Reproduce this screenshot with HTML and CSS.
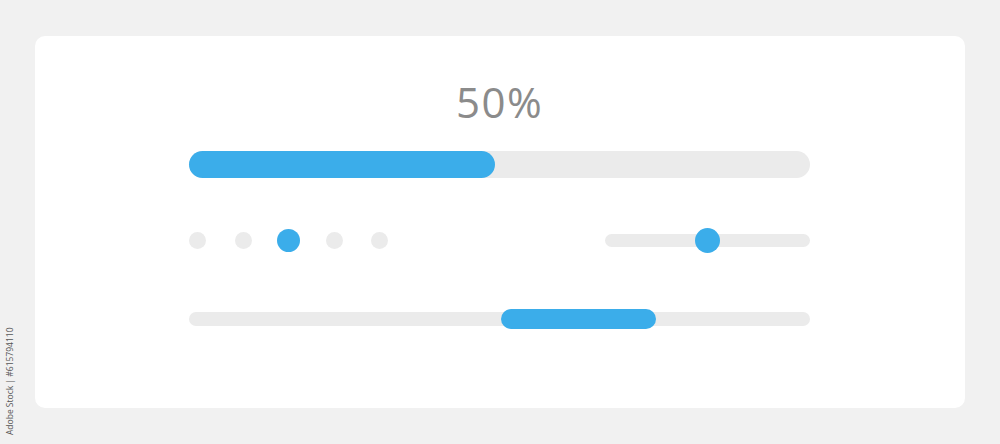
FILE: index.html
```html
<!DOCTYPE html>
<html lang="en">
<head>
<meta charset="utf-8">
<title>Progress UI</title>
<link rel="stylesheet" href="styles.css">
</head>
<body>
<main class="card">
  <div class="percent">50%</div>
  <div class="bar"><div class="bar-fill" style="width:306px"></div></div>
  <div class="controls">
    <div class="dots">
      <span class="dot"></span>
      <span class="dot"></span>
      <span class="dot active"></span>
      <span class="dot"></span>
      <span class="dot"></span>
    </div>
    <div class="slider">
      <div class="slider-track"></div>
      <span class="slider-knob" style="left:90px"></span>
    </div>
  </div>
  <div class="range">
    <div class="range-track"></div>
    <div class="range-sel" style="left:312px;width:155px"></div>
  </div>
</main>
<div class="credit">Adobe Stock | #615794110</div>
</body>
</html>
```
FILE: styles.css
```css
* { box-sizing: border-box; }
html, body { margin: 0; padding: 0; }
body {
  width: 1000px;
  height: 444px;
  background: #f1f1f1;
  padding: 36px 35px 36px 35px;
  font-family: "Open Sans", "Liberation Sans", sans-serif;
  position: relative;
  overflow: hidden;
}
.card {
  background: #ffffff;
  border-radius: 10px;
  height: 372px;
  padding: 0 155px 0 154px;
  display: flex;
  flex-direction: column;
}
.percent {
  margin-top: 38px;
  height: 56px;
  line-height: 56px;
  text-align: center;
  font-size: 42px;
  font-weight: 400;
  color: #8b8b8b;
  letter-spacing: 1.5px;
}
.bar {
  margin-top: 21px;
  height: 27px;
  border-radius: 14px;
  background: #ebebeb;
  display: flex;
}
.bar-fill {
  height: 100%;
  border-radius: 14px;
  background: #3badea;
}
.controls {
  margin-top: 50px;
  height: 25px;
  display: flex;
  align-items: center;
  justify-content: space-between;
}
.dots {
  display: flex;
  align-items: center;
  gap: 28.6px;
}
.dot {
  width: 17px;
  height: 17px;
  border-radius: 50%;
  background: #ebebeb;
}
.dot.active {
  width: 23px;
  height: 23px;
  margin: 0 -3px;
  background: #3badea;
}
.slider {
  position: relative;
  width: 205px;
  height: 25px;
  display: flex;
  align-items: center;
}
.slider-track {
  flex: 1;
  height: 13px;
  border-radius: 7px;
  background: #ebebeb;
}
.slider-knob {
  position: absolute;
  top: 0;
  width: 25px;
  height: 25px;
  border-radius: 50%;
  background: #3badea;
}
.range {
  position: relative;
  margin-top: 56px;
  height: 20px;
  display: flex;
  align-items: center;
}
.range-track {
  flex: 1;
  height: 14px;
  border-radius: 7px;
  background: #ebebeb;
}
.range-sel {
  position: absolute;
  top: 0;
  bottom: 0;
  border-radius: 10px;
  background: #3badea;
}
.credit {
  position: absolute;
  left: 4px;
  top: 435px;
  transform: rotate(-90deg);
  transform-origin: 0 0;
  font-family: "Open Sans", "Liberation Sans", sans-serif;
  font-size: 8.5px;
  line-height: 11px;
  color: #555555;
  white-space: nowrap;
}
```
